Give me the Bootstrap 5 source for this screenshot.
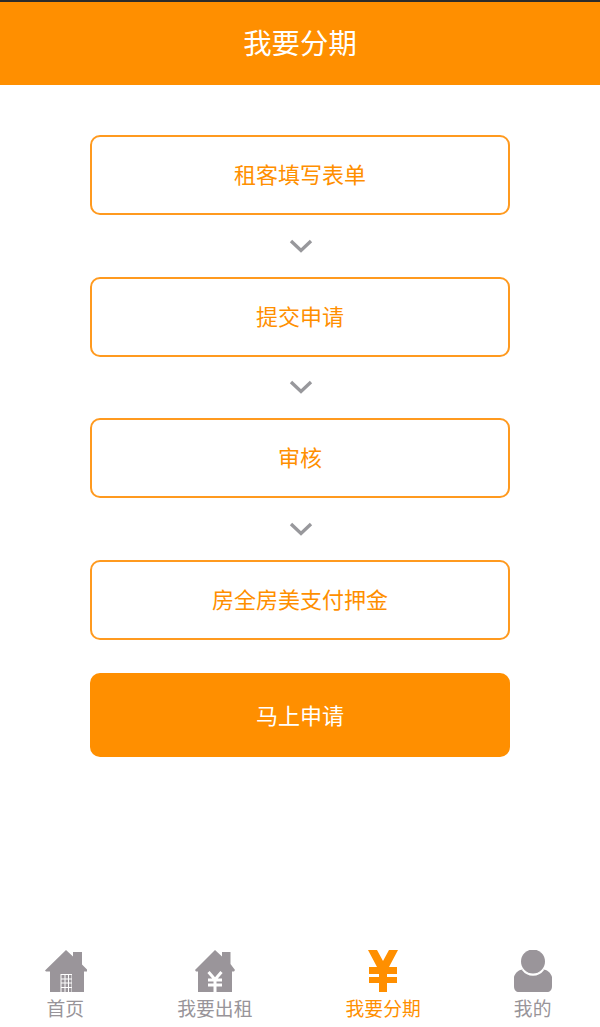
<!DOCTYPE html>
<html lang="zh-CN">
<head>
<meta charset="utf-8">
<title>我要分期</title>
<link href="https://cdn.jsdelivr.net/npm/bootstrap@5.3.0/dist/css/bootstrap.min.css" rel="stylesheet">
<style>
html, body { height: 100%; }
body { font-family: "Noto Sans CJK SC", "Liberation Sans", sans-serif; background: #fff; }
.app-shell { height: 1027px; overflow: hidden; }
.app-header { height: 85px; background: #ff8f00; border-top: 2px solid #2b2b2b; color: #fff; font-size: 28.4px; line-height: 1; padding-bottom: 3px; }
.flow-area { width: 420px; padding-top: 50px; }
.step-box { height: 80px; border: 2px solid #ff9a1f; border-radius: 10px; color: #ff8f00; font-size: 22px; background: #fff; padding-bottom: 3px; }
.step-arrow { height: 61.67px; }
.step-arrow svg { width: 24px; height: 16px; margin-left: 2px; }
.apply-btn { height: 84px; margin-top: 33px; background: #ff8f00; border: 0; border-radius: 10px; color: #fff; font-size: 22px; padding-top: 0; padding-bottom: 1px; }
.apply-btn:hover, .apply-btn:focus { background: #ff8f00; color: #fff; }
.tab-strip { height: 77px; padding-right: 2px; }
.tab-entry { color: #989499; font-size: 18.8px; line-height: 1; text-decoration: none; }
.tab-entry svg { width: 44px; height: 42px; margin: 0 -4px 7px; }
.tab-active { color: #ff8f00; }
</style>
</head>
<body>
<div class="app-shell d-flex flex-column">
  <header class="app-header d-flex align-items-center justify-content-center">我要分期</header>
  <main class="flow-area mx-auto">
    <div class="step-box d-flex align-items-center justify-content-center">租客填写表单</div>
    <div class="step-arrow d-flex align-items-center justify-content-center"><svg viewBox="0 0 24 16"><path d="M2 3 12 12.500 22 3" fill="none" stroke="#98989c" stroke-width="3.400"/></svg></div>
    <div class="step-box d-flex align-items-center justify-content-center">提交申请</div>
    <div class="step-arrow d-flex align-items-center justify-content-center"><svg viewBox="0 0 24 16"><path d="M2 3 12 12.500 22 3" fill="none" stroke="#98989c" stroke-width="3.400"/></svg></div>
    <div class="step-box d-flex align-items-center justify-content-center">审核</div>
    <div class="step-arrow d-flex align-items-center justify-content-center"><svg viewBox="0 0 24 16"><path d="M2 3 12 12.500 22 3" fill="none" stroke="#98989c" stroke-width="3.400"/></svg></div>
    <div class="step-box d-flex align-items-center justify-content-center">房全房美支付押金</div>
    <button type="button" class="btn apply-btn w-100 d-flex align-items-center justify-content-center">马上申请</button>
  </main>
  <nav class="tab-strip mt-auto d-flex justify-content-around align-items-start">
    <a href="#" class="tab-entry d-flex flex-column align-items-center">
      <svg viewBox="0 0 44 42"><path fill="#9a959a" fill-rule="evenodd" d="M23 0 30 6.500V2H39V14.500L45 20.500 44 21.500H41V42H7V21.500H3L2 20.500ZM17.500 24V42H29V24Z"/><path fill="#9a959a" d="M18.500 25h3v3.500h-3zM22.500 25h2.500v3.500h-2.500zM26 25h2.500v3.500h-2.500zM18.500 29.500h3v3h-3zM22.500 29.500h2.500v3h-2.500zM26 29.500h2.500v3h-2.500zM18.500 33.500h3v3.500h-3zM22.500 33.500h2.500v3.500h-2.500zM26 33.500h2.500v3.500h-2.500zM18.500 38h3v4h-3zM22.500 38h2.500v4h-2.500zM26 38h2.500v4h-2.500z"/></svg>
      首页
    </a>
    <a href="#" class="tab-entry d-flex flex-column align-items-center">
      <svg viewBox="0 0 44 42"><path fill="#9a959a" d="M22 0 29 6.500V2H37.500V14L42 20 41 21.500H39V42H5V21.500H3L2 20Z"/><path fill="none" stroke="#fff" stroke-width="3" d="M15.500 22 22 29.500 28.500 22M22 29.500V42M15 30H29M15 35H29"/></svg>
      我要出租
    </a>
    <a href="#" class="tab-entry tab-active d-flex flex-column align-items-center">
      <svg viewBox="0 0 44 42"><path fill="#ff8f00" d="M7 0H16L22 11 28 0H37L28 17H36V24H26V27H36V33H26V42H18V33H8V27H18V24H8V17H16Z"/></svg>
      我要分期
    </a>
    <a href="#" class="tab-entry d-flex flex-column align-items-center">
      <svg viewBox="0 0 44 42"><circle cx="22" cy="11.500" r="12" fill="#9a959a"/><path fill="#9a959a" d="M3 27C4 23 8 19.500 12 19.500 15 23 18 25 22 25S29 23 32 19.500C36 19.500 40 23 41 27V36C41 40 39 42 36 42H8C5 42 3 40 3 36Z"/><path fill="none" stroke="#fff" stroke-width="1.500" d="M11.500 19.500C14.500 23.500 18 25 22 25S29.500 23.500 32.500 19.500"/></svg>
      我的
    </a>
  </nav>
</div>
<script src="https://cdn.jsdelivr.net/npm/bootstrap@5.3.0/dist/js/bootstrap.bundle.min.js"></script>
</body>
</html>
